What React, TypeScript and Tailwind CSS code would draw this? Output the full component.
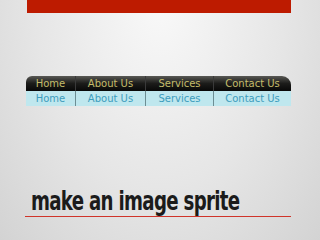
const items = [
    { label: "Home", w: "w-[49px]" },
    { label: "About Us", w: "w-[70px]" },
    { label: "Services", w: "w-[68px]" },
    { label: "Contact Us", w: "w-[78px]" },
];

function NavRow({ dark }: { dark: boolean }) {
    return (
        <div
            className={
                dark
                    ? "flex h-[15px] rounded-tl-[6px] rounded-tr-[9px] bg-gradient-to-b from-[#5a5a56] via-[#1c1c1a] to-[#080808]"
                    : "flex h-[15px] bg-[#bfe7ee]"
            }
        >
            {items.map((item, i) => (
                <div
                    key={item.label}
                    className={`${item.w} flex items-center justify-center text-[10px] leading-none ${
                        dark ? "text-[#c4bc6a]" : "text-[#3d9dbd]"
                    } ${i > 0 ? (dark ? "border-l border-[#3a3a3a]" : "border-l border-[#6d8e94]") : ""}`}
                >
                    {item.label}
                </div>
            ))}
        </div>
    );
}

export default function App() {
    return (
        <div className="w-[320px] h-[240px] overflow-hidden flex flex-col bg-[radial-gradient(ellipse_at_top,#f9f9f9_0%,#e6e6e6_55%,#d3d3d3_100%)] font-['DejaVu_Sans',sans-serif]">
            {/* Red header bar */}
            <div className="ml-[27px] w-[264px] h-[13px] bg-[#bd1b00]" />

            {/* Sprite nav */}
            <div className="ml-[26px] mt-[63px] w-[265px] flex flex-col">
                <NavRow dark />
                <NavRow dark={false} />
            </div>

            {/* Title */}
            <div className="ml-[31px] mt-[82px] h-[26px] whitespace-nowrap origin-left scale-x-[0.7] text-[26px] leading-[26px] font-black tracking-[-1px] text-[#1b1b1b] font-['DejaVu_Sans',sans-serif]">
                make an image sprite
            </div>
            <div className="ml-[25px] mt-[2px] w-[266px] border-t border-[#d0342a]" />
        </div>
    );
}
